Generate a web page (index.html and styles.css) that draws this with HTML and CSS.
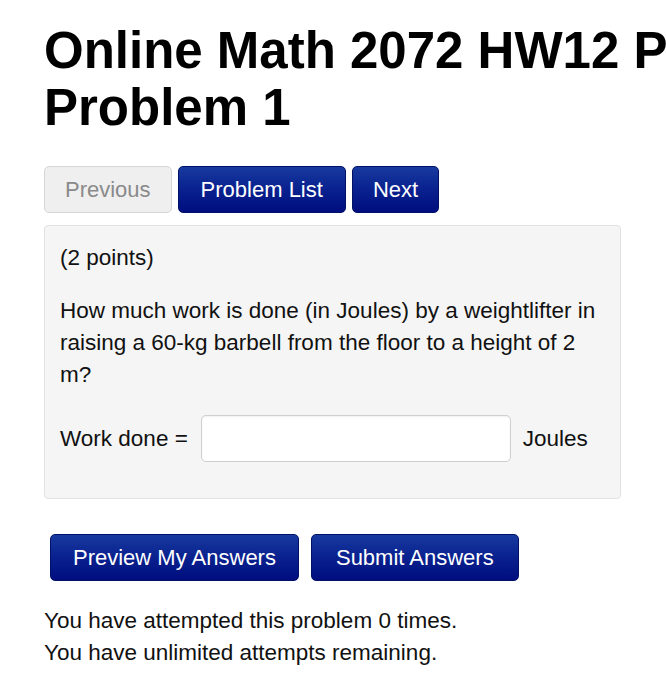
FILE: index.html
```html
<!DOCTYPE html>
<html lang="en">
<head>
<meta charset="utf-8">
<title>Online Math 2072 HW12 Problem 1</title>
<link rel="stylesheet" href="styles.css">
</head>
<body>
<div class="page">
  <h1 class="title"><span class="line">Online Math 2072 HW12 Physics</span><span class="line">Problem 1</span></h1>
  <nav class="nav-buttons">
    <span class="btn btn-disabled">Previous</span>
    <a class="btn btn-primary btn-wide" href="#">Problem List</a>
    <a class="btn btn-primary" href="#">Next</a>
  </nav>
  <div class="problem-box">
    <p class="points">(2 points)</p>
    <p class="question">How much work is done (in Joules) by a weightlifter in raising a 60-kg barbell from the floor to a height of 2 m?</p>
    <div class="answer-row">
      <label class="answer-label" for="ans">Work done =</label>
      <input class="answer-input" id="ans" type="text">
      <span class="unit">Joules</span>
    </div>
  </div>
  <div class="submit-buttons">
    <button class="btn btn-primary" type="button">Preview My Answers</button>
    <button class="btn btn-primary btn-submit" type="button">Submit Answers</button>
  </div>
  <p class="attempts">You have attempted this problem 0 times.<br>You have unlimited attempts remaining.</p>
</div>
</body>
</html>
```

FILE: styles.css
```css
html, body {
  margin: 0;
  padding: 0;
  background: #fff;
}
body {
  overflow-x: hidden;
  font-family: "Liberation Sans", Arial, Helvetica, sans-serif;
  color: #111;
  font-size: 22.5px;
  line-height: 32px;
}
.page {
  padding: 0 0 0 44px;
  width: 800px;
}
.title {
  margin: 22px 0 30px;
  font-size: 51px;
  line-height: 57px;
  font-weight: bold;
  color: #000;
}
.title .line {
  display: block;
  white-space: nowrap;
}
.nav-buttons {
  display: flex;
  gap: 6px;
}
.btn {
  display: inline-block;
  box-sizing: border-box;
  height: 47px;
  padding: 7px 20px;
  font-family: inherit;
  font-size: 22px;
  line-height: 31px;
  border-radius: 5px;
  text-decoration: none;
  border: 1px solid transparent;
  white-space: nowrap;
}
.nav-buttons .btn-wide {
  padding: 7px 22px;
}
.btn-disabled {
  background: #efefef;
  border-color: #d6d6d6;
  color: #8a8a8a;
}
.btn-primary {
  background: linear-gradient(to bottom, #183a9f 0%, #0a2390 45%, #000d7e 100%);
  border-color: #001265;
  color: #fff;
  cursor: pointer;
}
.problem-box {
  box-sizing: border-box;
  width: 577px;
  margin-top: 12px;
  padding: 16px 15px 36px;
  background: #f5f5f5;
  border: 1px solid #e2e2e2;
  border-radius: 4px;
}
.points {
  margin: 0 0 21px;
}
.question {
  margin: 0 0 24px;
}
.answer-row {
  display: flex;
  align-items: center;
}
.answer-label {
  margin-right: 13px;
}
.answer-input {
  box-sizing: border-box;
  width: 310px;
  height: 47px;
  margin: 0 12px 0 0;
  border: 1px solid #cfcfcf;
  border-radius: 5px;
  background: #fff;
  font-size: 22px;
  box-shadow: inset 0 1px 2px rgba(0,0,0,0.06);
}
.submit-buttons {
  display: flex;
  gap: 12px;
  margin: 35px 0 0 6px;
}
.submit-buttons .btn {
  padding: 7px 22px;
}
.submit-buttons .btn-submit {
  padding: 7px 24px;
}
.attempts {
  margin: 24px 0 0;
}
```
